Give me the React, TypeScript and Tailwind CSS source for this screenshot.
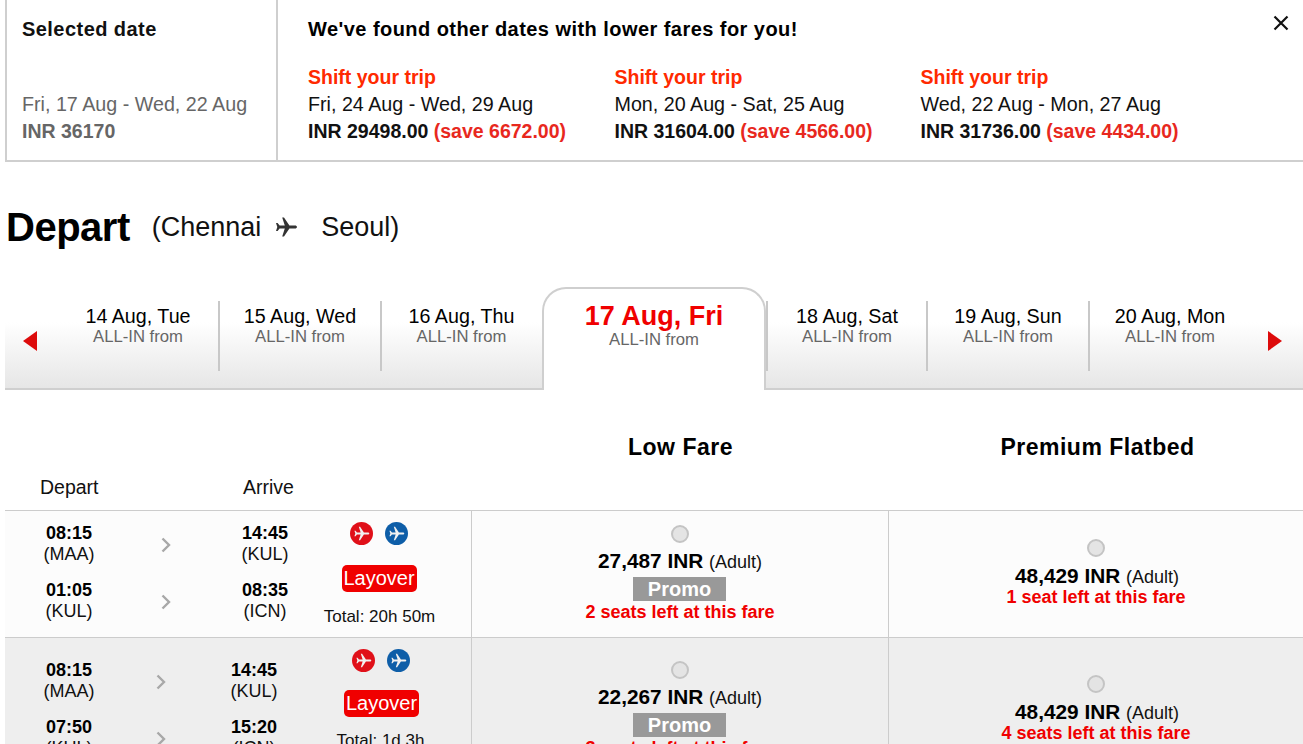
const Plane = ({ className, fill }: { className: string; fill: string }) => (
  <svg viewBox="0 0 24 24" className={className}>
    <path fill={fill} d="M23 12c0-.9-.9-1.500-2-1.500h-5.600L10 2.500H8.200l2.600 8H5.600L3.600 8H2l1.300 4L2 16h1.600l2-2.500h5.200l-2.600 8H10l5.400-8H21c1.100 0 2-.6 2-1.500z" />
  </svg>
);

const Badge = ({ color }: { color: string }) => (
  <span className={`flex h-[23px] w-[23px] items-center justify-center rounded-full ${color}`}>
    <Plane className="h-[17px] w-[17px]" fill="#f1f1f1" />
  </span>
);

const Radio = () => (
  <span className="block h-[18px] w-[18px] rounded-full border-2 border-[#c4c4c4] bg-[#e4e4e4]" />
);

const Chevron = () => (
  <svg viewBox="0 0 10 16" className="h-[16px] w-[10px]">
    <path d="M1.500 1.500 8 8l-6.500 6.500" fill="none" stroke="#a8a8a8" strokeWidth="2.400" />
  </svg>
);

const Shift = ({ dates, price, save, w }: { dates: string; price: string; save: string; w: string }) => (
  <div className={w}>
    <div className="text-[19.500px] font-bold leading-[27px] text-[#ff2a00]">Shift your trip</div>
    <div className="text-[19.700px] leading-[27px] text-[#111]">{dates}</div>
    <div className="whitespace-nowrap text-[19.500px] font-bold leading-[27px] text-[#111]">
      INR {price} <span className="text-[#e8281e]">(save {save})</span>
    </div>
  </div>
);

const DateTab = ({ date, cls }: { date: string; cls: string }) => (
  <div className={`h-[70px] shrink-0 pt-[3px] text-center ${cls}`}>
    <div className="text-[19.700px] leading-[24px] text-black">{date}</div>
    <div className="text-[16.700px] leading-[18px] text-[#666]">ALL-IN from</div>
  </div>
);

const Leg = ({ t1, a1, t2, a2, arriveW, chevronW }: { t1: string; a1: string; t2: string; a2: string; arriveW: string; chevronW: string }) => (
  <div className="flex h-[57px] w-full items-start">
    <div className="w-[128px] shrink-0 text-center">
      <div className="text-[18px] font-bold leading-[21px] text-black">{t1}</div>
      <div className="text-[18px] leading-[21px] text-[#111]">{a1}</div>
    </div>
    <div className={`flex shrink-0 justify-center pt-[14px] ${chevronW}`}>
      <Chevron />
    </div>
    <div className={`shrink-0 text-center ${arriveW}`}>
      <div className="text-[18px] font-bold leading-[21px] text-black">{t2}</div>
      <div className="text-[18px] leading-[21px] text-[#111]">{a2}</div>
    </div>
  </div>
);

const Fare = ({ price, seats, promo, pt }: { price: string; seats: string; promo?: boolean; pt: string }) => (
  <div className={`flex flex-col items-center ${pt}`}>
    <Radio />
    <div className={`text-[20.800px] font-bold leading-[26px] text-black ${promo ? "mt-[5px]" : "ml-[2px] mt-[6px]"}`}>
      {price} INR <span className="text-[18px] font-normal text-[#111]">(Adult)</span>
    </div>
    {promo && (
      <div className="-ml-[1px] mt-[2px] h-[24px] w-[93px] bg-[#999] text-center text-[20px] font-bold leading-[24px] text-white">Promo</div>
    )}
    <div className={`text-[18px] font-bold leading-[22px] text-[#f00000] ${promo ? "mt-0" : "-mt-[4px]"}`}>{seats}</div>
  </div>
);

export default function App() {
  return (
    <div className="h-[744px] w-[1303px] overflow-hidden bg-white font-['Liberation_Sans',Arial,sans-serif]">
      <div className="relative ml-[5px] flex h-[162px] border-b-2 border-l-2 border-[#cfcfcf]">
        <div className="flex h-full w-[271px] shrink-0 flex-col border-r-2 border-[#cfcfcf] pl-[15px]">
          <div className="mt-[16px] text-[20px] font-bold leading-[27px] tracking-[0.45px] text-[#111]">Selected date</div>
          <div className="mt-[48px] text-[19.700px] leading-[27px] text-[#666]">Fri, 17 Aug - Wed, 22 Aug</div>
          <div className="text-[19.500px] font-bold leading-[27px] text-[#666]">INR 36170</div>
        </div>
        <div className="flex-1 pl-[30px]">
          <div className="mt-[16px] text-[20px] font-bold leading-[27px] tracking-[0.45px] text-black">We've found other dates with lower fares for you!</div>
          <div className="mt-[21px] flex">
            <Shift w="w-[306.500px]" dates="Fri, 24 Aug - Wed, 29 Aug" price="29498.00" save="6672.00" />
            <Shift w="w-[306px]" dates="Mon, 20 Aug - Sat, 25 Aug" price="31604.00" save="4566.00" />
            <Shift w="w-[300px]" dates="Wed, 22 Aug - Mon, 27 Aug" price="31736.00" save="4434.00" />
          </div>
        </div>
        <svg viewBox="0 0 16 16" className="absolute right-[14px] top-[15px] h-[16px] w-[16px]">
          <path d="M1.500 1.500l13 13M14.500 1.500l-13 13" stroke="#111" strokeWidth="2.200" fill="none" />
        </svg>
      </div>

      <div className="ml-[6px] mt-[39px] flex h-[52px] items-center">
        <h1 className="text-[40px] font-bold leading-[52px] tracking-[-0.5px] text-black">Depart</h1>
        <div className="ml-[22px] flex items-center text-[27px] leading-[34px] text-[#111]">
          <span>(Chennai</span>
          <Plane className="ml-[13px] h-[24px] w-[24px]" fill="#333" />
          <span className="ml-[23px]">Seoul)</span>
        </div>
      </div>

      <div className="relative ml-[5px] mt-[34px] flex h-[103px] items-start border-b-2 border-[#cfcfcf] bg-gradient-to-b from-white from-[35%] to-[#e6e6e6]">
        <div className="flex h-[84px] w-[53px] shrink-0 items-center pl-[18px] pt-[23px]">
          <span className="block h-0 w-0 border-y-[10px] border-r-[14px] border-y-transparent border-r-[#dd0b0b]" />
        </div>
        <div className="mt-[14px] flex items-start">
          <DateTab date="14 Aug, Tue" cls="w-[162px] border-r-2 border-[#c8c8c8]" />
          <DateTab date="15 Aug, Wed" cls="w-[162px] border-r-2 border-[#c8c8c8]" />
          <DateTab date="16 Aug, Thu" cls="w-[161px] pr-[2px]" />
        </div>
        <div className="z-10 -ml-[1px] h-[103px] w-[224px] shrink-0 rounded-t-[24px] border-x-2 border-t-2 border-[#cfcfcf] bg-white pt-[12px] text-center">
          <div className="text-[27px] font-bold leading-[30px] text-[#f00000]">17 Aug, Fri</div>
          <div className="text-[16.700px] leading-[18px] text-[#666]">ALL-IN from</div>
        </div>
        <div className="mt-[14px] flex items-start">
          <DateTab date="18 Aug, Sat" cls="w-[162px] border-x-2 border-[#c8c8c8]" />
          <DateTab date="19 Aug, Sun" cls="w-[162px] border-r-2 border-[#c8c8c8]" />
          <DateTab date="20 Aug, Mon" cls="w-[160px]" />
        </div>
        <div className="flex h-[84px] flex-1 items-center pl-[18px] pt-[23px]">
          <span className="block h-0 w-0 border-y-[10px] border-l-[14px] border-y-transparent border-l-[#dd0b0b]" />
        </div>
      </div>

      <div className="ml-[5px] flex h-[121px] border-b border-[#cccccc]">
        <div className="flex h-full w-[466px] shrink-0 items-end pb-[10px]">
          <div className="w-[128px] pl-[35px] text-[19.500px] leading-[26px] text-[#111]">Depart</div>
          <div className="pl-[110px] text-[19.500px] leading-[26px] text-[#111]">Arrive</div>
        </div>
        <div className="w-[417px] shrink-0 pl-[2px] pt-[43px] text-center text-[23px] font-bold leading-[28px] tracking-[0.5px] text-black">Low Fare</div>
        <div className="flex-1 pl-[4px] pt-[43px] text-center text-[23px] font-bold leading-[28px] tracking-[0.5px] text-black">Premium Flatbed</div>
      </div>

      <div className="ml-[5px] flex h-[127px] border-b border-[#cccccc] bg-[#fcfcfc]">
        <div className="flex w-[467px] shrink-0 border-r border-[#cccccc]">
          <div className="w-[319px] shrink-0 pt-[12px]">
            <Leg t1="08:15" a1="(MAA)" t2="14:45" a2="(KUL)" chevronW="w-[66px]" arriveW="w-[132px]" />
            <Leg t1="01:05" a1="(KUL)" t2="08:35" a2="(ICN)" chevronW="w-[66px]" arriveW="w-[132px]" />
          </div>
          <div className="flex w-[112px] shrink-0 flex-col items-center pt-[11px]">
            <div className="-ml-[3px] flex gap-[12px]"><Badge color="bg-[#e01019]" /><Badge color="bg-[#0e5ea8]" /></div>
            <div className="-ml-[2px] mt-[20px] h-[27px] w-[75px] rounded-[5px] bg-[#f00000] text-center text-[20px] leading-[27px] text-white">Layover</div>
            <div className="-ml-[1px] mt-[15px] whitespace-nowrap text-[17px] leading-[20px] text-[#111]">Total: 20h 50m</div>
          </div>
        </div>
        <div className="w-[417px] shrink-0 border-r border-[#cccccc]">
          <Fare pt="pt-[14px]" price="27,487" seats="2 seats left at this fare" promo />
        </div>
        <div className="flex-1">
          <Fare pt="pt-[28px]" price="48,429" seats="1 seat left at this fare" />
        </div>
      </div>

      <div className="ml-[5px] flex h-[127px] bg-[#eeeeee]">
        <div className="flex w-[467px] shrink-0 border-r border-[#cccccc]">
          <div className="w-[319px] shrink-0 pt-[22px]">
            <Leg t1="08:15" a1="(MAA)" t2="14:45" a2="(KUL)" chevronW="w-[56px]" arriveW="w-[130px]" />
            <Leg t1="07:50" a1="(KUL)" t2="15:20" a2="(ICN)" chevronW="w-[56px]" arriveW="w-[130px]" />
          </div>
          <div className="flex w-[112px] shrink-0 flex-col items-center pt-[11px]">
            <div className="ml-[2px] flex gap-[12px]"><Badge color="bg-[#e01019]" /><Badge color="bg-[#0e5ea8]" /></div>
            <div className="ml-[3px] mt-[18px] h-[27px] w-[75px] rounded-[5px] bg-[#f00000] text-center text-[20px] leading-[27px] text-white">Layover</div>
            <div className="ml-[1px] mt-[14px] whitespace-nowrap text-[17px] leading-[20px] text-[#111]">Total: 1d 3h</div>
          </div>
        </div>
        <div className="w-[417px] shrink-0 border-r border-[#cccccc]">
          <Fare pt="pt-[23px]" price="22,267" seats="3 seats left at this fare" promo />
        </div>
        <div className="flex-1">
          <Fare pt="pt-[37px]" price="48,429" seats="4 seats left at this fare" />
        </div>
      </div>
    </div>
  );
}
